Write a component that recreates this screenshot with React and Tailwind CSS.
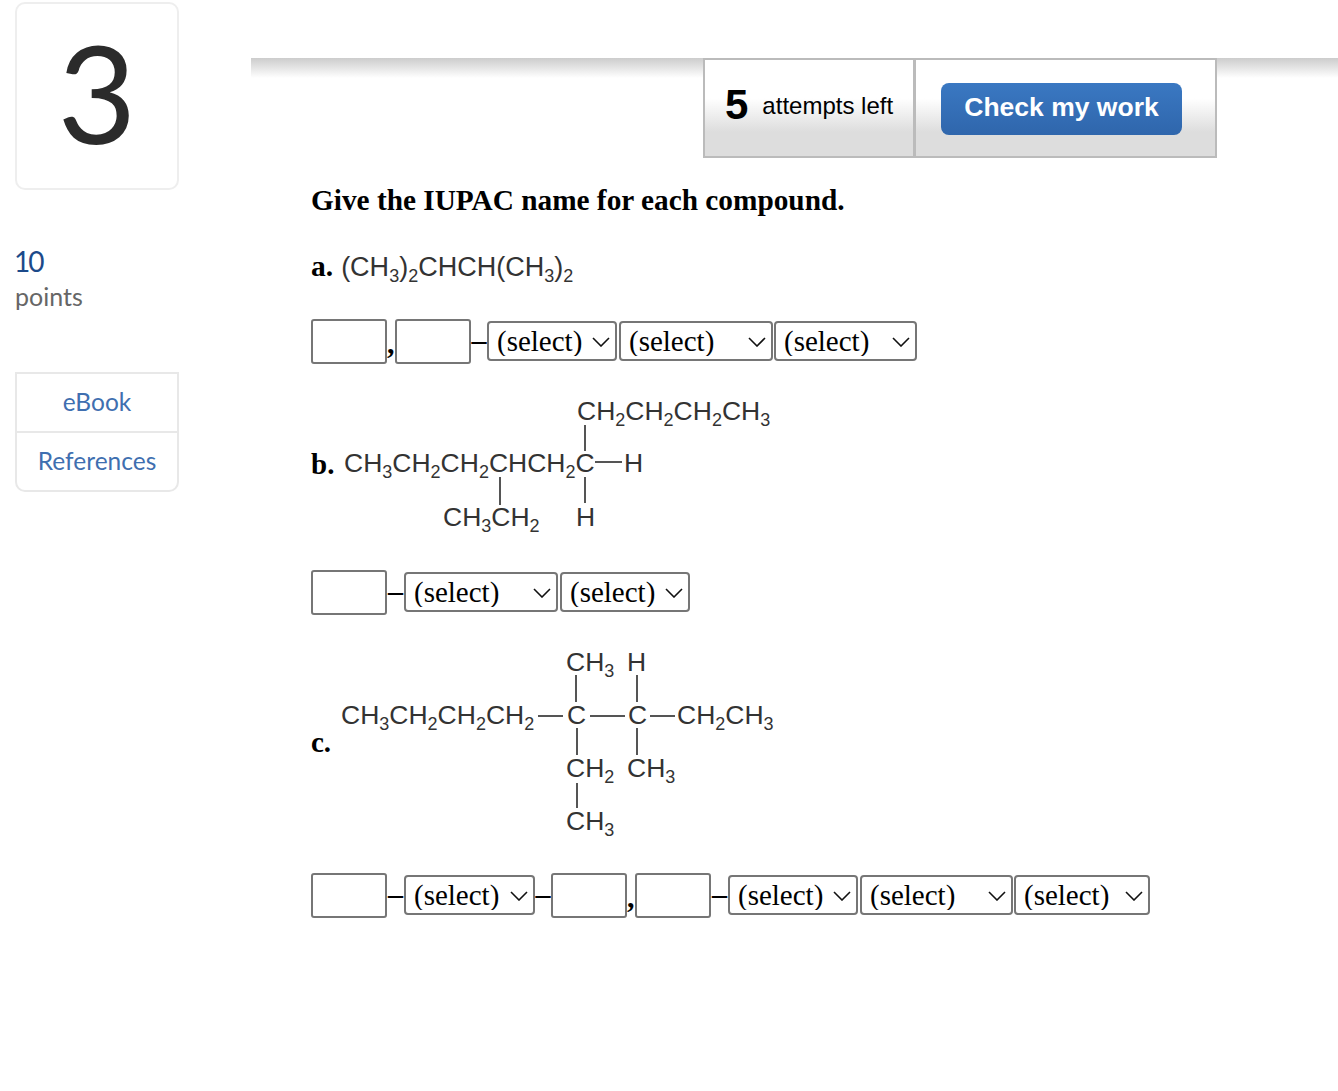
import React from 'react';

const serif = '"Liberation Serif", serif';
const sans = '"Liberation Sans", sans-serif';

function Sub({ children }) {
  return <sub className="text-[18px] bottom-[-6px]">{children}</sub>;
}

function Blank() {
  return <input type="text" className="w-[76px] h-[45px] bg-white border-2 border-[#767676] rounded-[3px]" />;
}

function Pick({ className }) {
  return (
    <div className={`relative h-[40px] mb-[2px] ${className}`}>
      <select className="appearance-none w-full h-full bg-white border-2 border-[#767676] rounded-[4px] pl-[8px] py-0 text-[29px] leading-[30px] text-black outline-none">
        <option>(select)</option>
      </select>
      <svg width="18" height="10" viewBox="0 0 18 10" fill="none" stroke="#111" strokeWidth="1.6" className="absolute right-[7px] top-[16px]">
        <polyline points="1,1 9,9 17,1" />
      </svg>
    </div>
  );
}

function Dash({ className = 'w-[17px]' }) {
  return <span className={`text-center text-[30px] leading-none font-bold mb-[3px] ${className}`}>–</span>;
}

function Comma() {
  return <span className="w-[8px] self-end text-[30px] leading-[30px] font-bold mb-[6px]">,</span>;
}

function Chem({ className, children }) {
  return <span className={`absolute text-[26.5px] leading-none whitespace-nowrap ${className}`}>{children}</span>;
}

function Bond({ className }) {
  return <div className={`absolute bg-[#555] ${className}`} />;
}

export default function App() {
  return (
    <div className="flex items-start w-full h-[1091px] bg-white overflow-hidden">
      {/* Left rail */}
      <aside className="w-[164px] ml-[15px] mt-[2px] shrink-0 font-['Lato',sans-serif]">
        <div className="h-[188px] border-2 border-[#eee] rounded-[10px] flex items-center justify-center">
          <span className="text-[136px] leading-none text-[#2b2b2b] -mt-[8px]">3</span>
        </div>
        <div className="mt-[54px] text-[28px] leading-[34px] tracking-[-2px] -ml-px text-[#1c4a8a]">10</div>
        <div className="mt-[1px] text-[25px] leading-[34px] text-[#666]">points</div>
        <div className="mt-[59px] border-2 border-[#e8e8e8] rounded-b-[10px] text-center text-[24.5px] text-[#3f6fb0]">
          <div className="h-[59px] leading-[56px] border-b-2 border-[#e8e8e8]">eBook</div>
          <div className="h-[57px] leading-[56px]">References</div>
        </div>
      </aside>

      {/* Question area */}
      <main className="flex-1 ml-[72px] mt-[58px]" style={{ fontFamily: serif }}>
        <div className="h-[100px] pl-[452px] flex bg-[linear-gradient(#ccc,#fff_20px)]" style={{ fontFamily: sans }}>
          <div className="w-[212px] h-[100px] pl-[20px] pb-[4px] flex items-center border-2 border-[#bbb] bg-[linear-gradient(#fff_40%,#ddd_75%)]">
            <span className="text-[42px] font-bold text-black mb-[3px]">5</span>
            <span className="ml-[14px] text-[24px] text-black">attempts left</span>
          </div>
          <div className="w-[302px] h-[100px] pl-[25px] pt-[2px] flex items-center border-2 border-l-[1px] border-[#bbb] bg-[linear-gradient(#fff_40%,#ddd_75%)]">
            <button className="w-[241px] h-[52px] pb-[2px] rounded-[8px] bg-[linear-gradient(#3a78c2,#2f66ac)] text-white text-[26.5px] font-bold">
              Check my work
            </button>
          </div>
        </div>

        <div className="pl-[60px]">
          <h1 className="mt-[24px] text-[29.3px] leading-[36px] font-bold text-black">Give the IUPAC name for each compound.</h1>

          <p className="mt-[30px] h-[42px] flex items-baseline leading-[36px]">
            <b className="text-[29.5px] mr-[8px]">a.</b>
            <span className="text-[#333] text-[27px]" style={{ fontFamily: sans }}>
              (CH<Sub>3</Sub>)<Sub>2</Sub>CHCH(CH<Sub>3</Sub>)<Sub>2</Sub>
            </span>
          </p>

          <div className="mt-[29px] flex items-center">
            <Blank />
            <Comma />
            <Blank />
            <Dash className="w-[16px]" />
            <Pick className="w-[130px]" />
            <Pick className="w-[154px] ml-[2px]" />
            <Pick className="w-[143px] ml-[1px]" />
          </div>

          {/* b. structure */}
          <div className="relative mt-[26px] h-[180px] text-[#333]" style={{ fontFamily: sans }}>
            <Chem className="left-[266px] top-[8px]">CH<Sub>2</Sub>CH<Sub>2</Sub>CH<Sub>2</Sub>CH<Sub>3</Sub></Chem>
            <Bond className="left-[273px] top-[35px] w-[1.5px] h-[26px]" />
            <b className="absolute left-0 top-[60px] text-[29px] leading-none text-black" style={{ fontFamily: serif }}>b.</b>
            <Chem className="left-[33px] top-[60px]">CH<Sub>3</Sub>CH<Sub>2</Sub>CH<Sub>2</Sub>CHCH<Sub>2</Sub>C</Chem>
            <Bond className="left-[284px] top-[71px] w-[27px] h-[1.5px]" />
            <Chem className="left-[313px] top-[60px]">H</Chem>
            <Bond className="left-[188px] top-[87px] w-[1.5px] h-[28px]" />
            <Bond className="left-[273px] top-[87px] w-[1.5px] h-[26px]" />
            <Chem className="left-[132px] top-[114px]">CH<Sub>3</Sub>CH<Sub>2</Sub></Chem>
            <Chem className="left-[265px] top-[114px]">H</Chem>
          </div>

          <div className="flex items-center">
            <Blank />
            <Dash />
            <Pick className="w-[154px]" />
            <Pick className="w-[130px] ml-[2px]" />
          </div>

          {/* c. structure */}
          <div className="relative mt-[25px] h-[233px] text-[#333]" style={{ fontFamily: sans }}>
            <Chem className="left-[255px] top-[9px]">CH<Sub>3</Sub></Chem>
            <Chem className="left-[316px] top-[9px]">H</Chem>
            <Bond className="left-[264px] top-[35px] w-[1.5px] h-[27px]" />
            <Bond className="left-[325px] top-[35px] w-[1.5px] h-[27px]" />
            <Chem className="left-[30px] top-[62px]">CH<Sub>3</Sub>CH<Sub>2</Sub>CH<Sub>2</Sub>CH<Sub>2</Sub></Chem>
            <Bond className="left-[227px] top-[75px] w-[25px] h-[1.5px]" />
            <Chem className="left-[256px] top-[62px]">C</Chem>
            <Bond className="left-[279px] top-[75px] w-[35px] h-[1.5px]" />
            <Chem className="left-[317px] top-[62px]">C</Chem>
            <Bond className="left-[339px] top-[75px] w-[25px] h-[1.5px]" />
            <Chem className="left-[366px] top-[62px]">CH<Sub>2</Sub>CH<Sub>3</Sub></Chem>
            <b className="absolute left-0 top-[88px] text-[29px] leading-none text-black" style={{ fontFamily: serif }}>c.</b>
            <Bond className="left-[265px] top-[88px] w-[1.5px] h-[27px]" />
            <Bond className="left-[325px] top-[88px] w-[1.5px] h-[27px]" />
            <Chem className="left-[255px] top-[115px]">CH<Sub>2</Sub></Chem>
            <Chem className="left-[316px] top-[115px]">CH<Sub>3</Sub></Chem>
            <Bond className="left-[265px] top-[143px] w-[1.5px] h-[25px]" />
            <Chem className="left-[255px] top-[168px]">CH<Sub>3</Sub></Chem>
          </div>

          <div className="flex items-center">
            <Blank />
            <Dash />
            <Pick className="w-[131px]" />
            <Dash className="w-[16px]" />
            <Blank />
            <Comma />
            <Blank />
            <Dash />
            <Pick className="w-[130px]" />
            <Pick className="w-[153px] ml-[2px]" />
            <Pick className="w-[136px] ml-[1px]" />
          </div>
        </div>
      </main>
    </div>
  );
}
